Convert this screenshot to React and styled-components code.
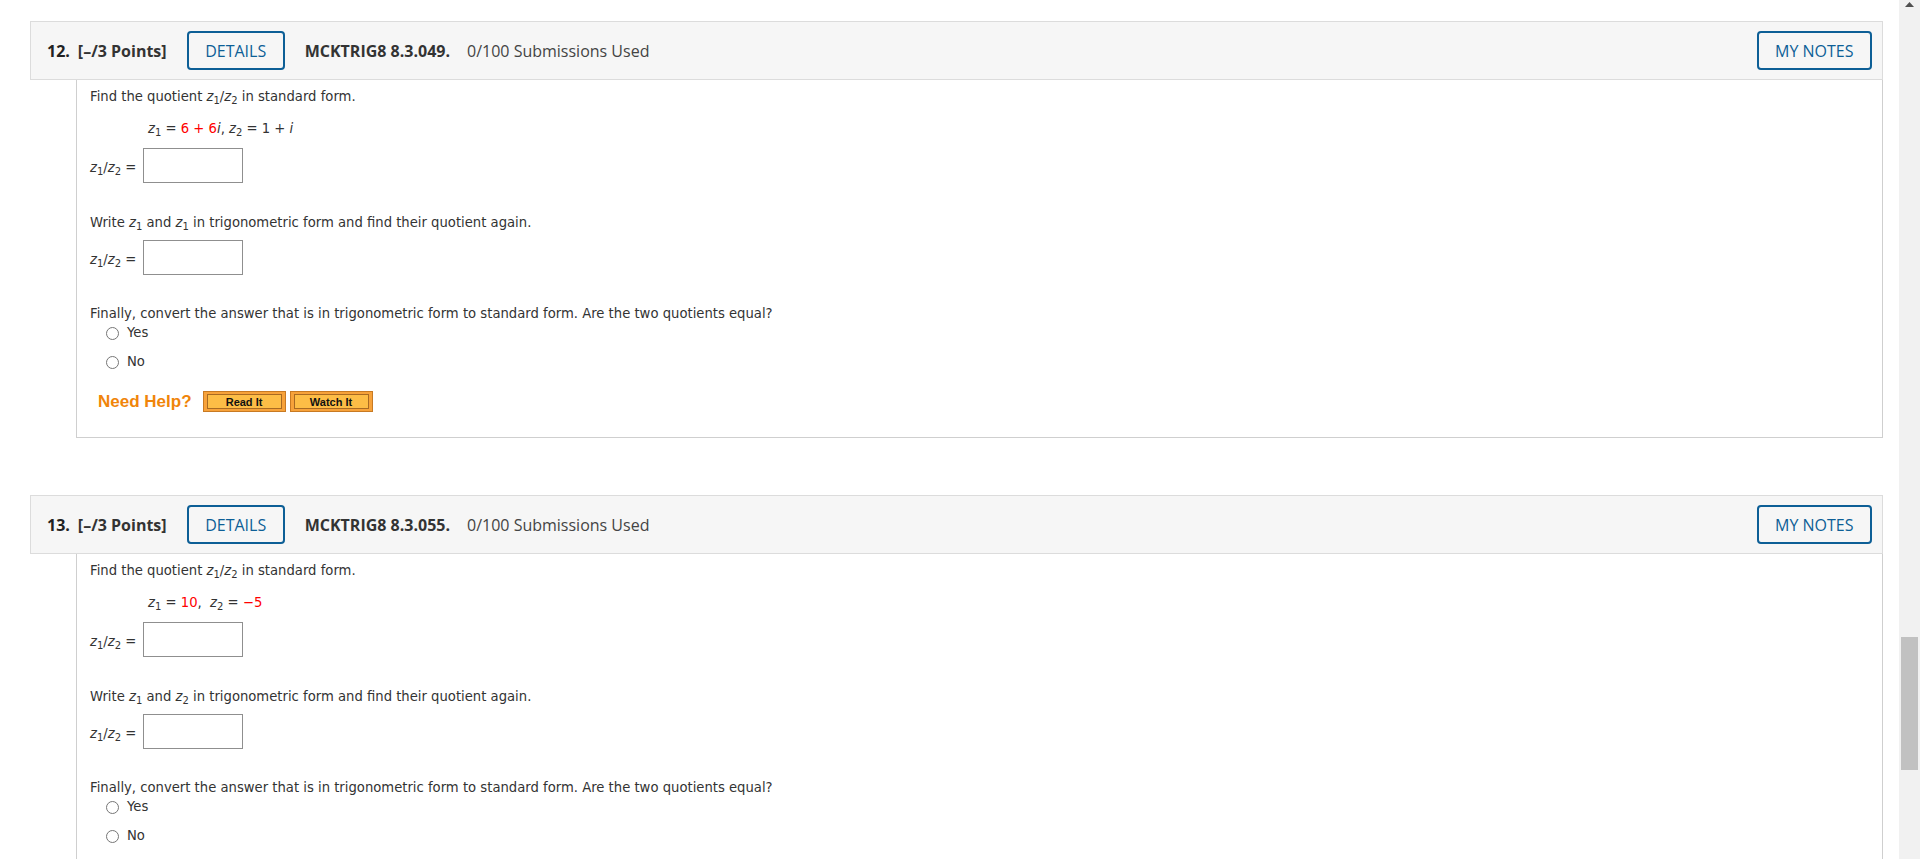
import React from "react";
import styled, { createGlobalStyle } from "styled-components";

const GlobalStyle = createGlobalStyle`
  html, body {
    margin: 0;
    padding: 0;
    height: 100%;
    overflow: hidden;
    background: #fff;
  }
  body {
    font-family: "Open Sans", "Liberation Sans", sans-serif;
  }
`;

const Frame = styled.div`
  display: flex;
  height: 100vh;
`;

const Page = styled.main`
  flex: 1;
  min-width: 0;
  overflow: hidden;
  padding: 21px 16px 0 30px;
`;

const ScrollTrack = styled.div`
  width: 21px;
  flex-shrink: 0;
  background: #f1f1f1;
  display: flex;
  flex-direction: column;
  align-items: center;
`;

const ScrollArrow = styled.div`
  height: 17px;
  width: 100%;
  display: flex;
  justify-content: center;
  padding-top: 2px;
  box-sizing: border-box;
`;

const ScrollThumb = styled.div`
  width: 17px;
  height: 133px;
  margin-top: 620px;
  background: #c1c1c1;
`;

const Problem = styled.section`
  & + & {
    margin-top: 57px;
  }
`;

const Header = styled.header`
  display: flex;
  align-items: center;
  height: 39px;
  padding: 9px 10px 9px 16px;
  background: #f6f6f6;
  border: 1px solid #dcdcdc;
  font-size: 16px;
  color: #333;
`;

const Number = styled.span`
  font-weight: 700;
  color: #222;
`;

const Points = styled.span`
  font-weight: 700;
  margin-left: 8px;
`;

const OutlineButton = styled.button`
  height: 39px;
  box-sizing: border-box;
  padding: 0 16.5px;
  margin-left: ${(p) => (p.$right ? "auto" : "20px")};
  border: 2px solid #0d5f96;
  border-radius: 4px;
  background: transparent;
  color: #0d5f96;
  font-family: "Open Sans", "Liberation Sans", sans-serif;
  font-size: 16px;
`;

const Code = styled.span`
  font-weight: 700;
  margin-left: 20px;
`;

const Used = styled.span`
  margin-left: 17px;
  color: #444;
`;

const Body = styled.div`
  margin-left: 46px;
  border: 1px solid #cfcfcf;
  border-top: none;
  padding: 9px 14px 25px 13px;
  font-family: "DejaVu Sans", Verdana, sans-serif;
  font-size: 13.2px;
  line-height: 16px;
  color: #333;
`;

const Line = styled.p`
  margin: ${(p) => p.$top || 0}px 0 0;
  padding-left: ${(p) => p.$indent || 0}px;
`;

const Var = styled.i`
  font-style: oblique;
`;

const Sub = styled.sub`
  font-size: 10px;
  line-height: 0;
  vertical-align: -3px;
`;

const Red = styled.span`
  color: #ff0000;
`;

const AnswerRow = styled.div`
  display: flex;
  align-items: center;
  margin-top: ${(p) => p.$top}px;
  height: 35px;
`;

const AnswerLabel = styled.span`
  padding-top: 5px;
  margin-right: 7px;
`;

const AnswerBox = styled.input`
  width: 100px;
  height: 35px;
  box-sizing: border-box;
  border: 1px solid #8f8f8f;
  background: #fff;
  margin: 0;
  padding: 0 4px;
`;

const RadioRow = styled.label`
  display: flex;
  align-items: center;
  gap: 8px;
  padding-left: 16px;
  margin-top: ${(p) => p.$top}px;
  height: 16px;
`;

const RadioDot = styled.span`
  width: 13px;
  height: 13px;
  box-sizing: border-box;
  border: 1px solid #767676;
  border-radius: 50%;
  background: #fff;
`;

const HelpRow = styled.div`
  display: flex;
  align-items: center;
  height: 21px;
  margin-top: 21px;
  padding-left: 8px;
`;

const NeedHelp = styled.span`
  font-family: "Liberation Sans", Arial, sans-serif;
  font-weight: 700;
  font-size: 17px;
  color: #f0850a;
  margin-right: 11px;
`;

const HelpButton = styled.button`
  display: flex;
  width: 83px;
  height: 21px;
  box-sizing: border-box;
  padding: 2px 3px;
  margin: 0 4px 0 0;
  border: 1px solid #c87a23;
  background: #f7a23a;
`;

const HelpFace = styled.span`
  flex: 1;
  display: flex;
  align-items: center;
  justify-content: center;
  border: 1px solid #a96a22;
  background: #fdbd46;
  font-family: "Liberation Sans", Arial, sans-serif;
  font-weight: 700;
  font-size: 11px;
  color: #111;
`;

const Quot = () => (
  <>
    <Var>z</Var>
    <Sub>1</Sub>/<Var>z</Var>
    <Sub>2</Sub>
  </>
);

const Z = ({ n }) => (
  <>
    <Var>z</Var>
    <Sub>{n}</Sub>
  </>
);

const problems = [
  {
    num: "12.",
    code: "MCKTRIG8 8.3.049.",
    expr: (
      <>
        <Z n={1} /> = <Red>6 + 6</Red>
        <Var>i</Var>, <Z n={2} /> = 1 + <Var>i</Var>
      </>
    ),
    second: 1,
    help: true,
  },
  {
    num: "13.",
    code: "MCKTRIG8 8.3.055.",
    expr: (
      <>
        <Z n={1} /> = <Red>10</Red>,&nbsp; <Z n={2} /> = <Red>−5</Red>
      </>
    ),
    second: 2,
    // the help row of this one lies below the fold
    help: false,
  },
];

export default function App() {
  return (
    <>
      <GlobalStyle />
      <Frame>
        <Page>
          {problems.map((p) => (
            <Problem key={p.num}>
              <Header>
                <Number>{p.num}</Number>
                <Points>[–/3 Points]</Points>
                <OutlineButton>DETAILS</OutlineButton>
                <Code>{p.code}</Code>
                <Used>0/100 Submissions Used</Used>
                <OutlineButton $right>MY NOTES</OutlineButton>
              </Header>
              <Body>
                <Line>
                  Find the quotient <Quot /> in standard form.
                </Line>
                <Line $top={16} $indent={58}>
                  {p.expr}
                </Line>
                <AnswerRow $top={11}>
                  <AnswerLabel>
                    <Quot /> =
                  </AnswerLabel>
                  <AnswerBox type="text" />
                </AnswerRow>
                <Line $top={32}>
                  Write <Z n={1} /> and <Z n={p.second} /> in trigonometric form
                  and find their quotient again.
                </Line>
                <AnswerRow $top={9}>
                  <AnswerLabel>
                    <Quot /> =
                  </AnswerLabel>
                  <AnswerBox type="text" />
                </AnswerRow>
                <Line $top={31}>
                  Finally, convert the answer that is in trigonometric form to
                  standard form. Are the two quotients equal?
                </Line>
                <RadioRow $top={3}>
                  <RadioDot />
                  Yes
                </RadioRow>
                <RadioRow $top={13}>
                  <RadioDot />
                  No
                </RadioRow>
                {p.help && (
                  <HelpRow>
                    <NeedHelp>Need Help?</NeedHelp>
                    <HelpButton>
                      <HelpFace>Read It</HelpFace>
                    </HelpButton>
                    <HelpButton>
                      <HelpFace>Watch It</HelpFace>
                    </HelpButton>
                  </HelpRow>
                )}
              </Body>
            </Problem>
          ))}
        </Page>
        <ScrollTrack>
          <ScrollArrow>
            <svg width="9" height="5" viewBox="0 0 9 5">
              <polygon points="0,5 4.5,0 9,5" fill="#505050" />
            </svg>
          </ScrollArrow>
          <ScrollThumb />
        </ScrollTrack>
      </Frame>
    </>
  );
}
